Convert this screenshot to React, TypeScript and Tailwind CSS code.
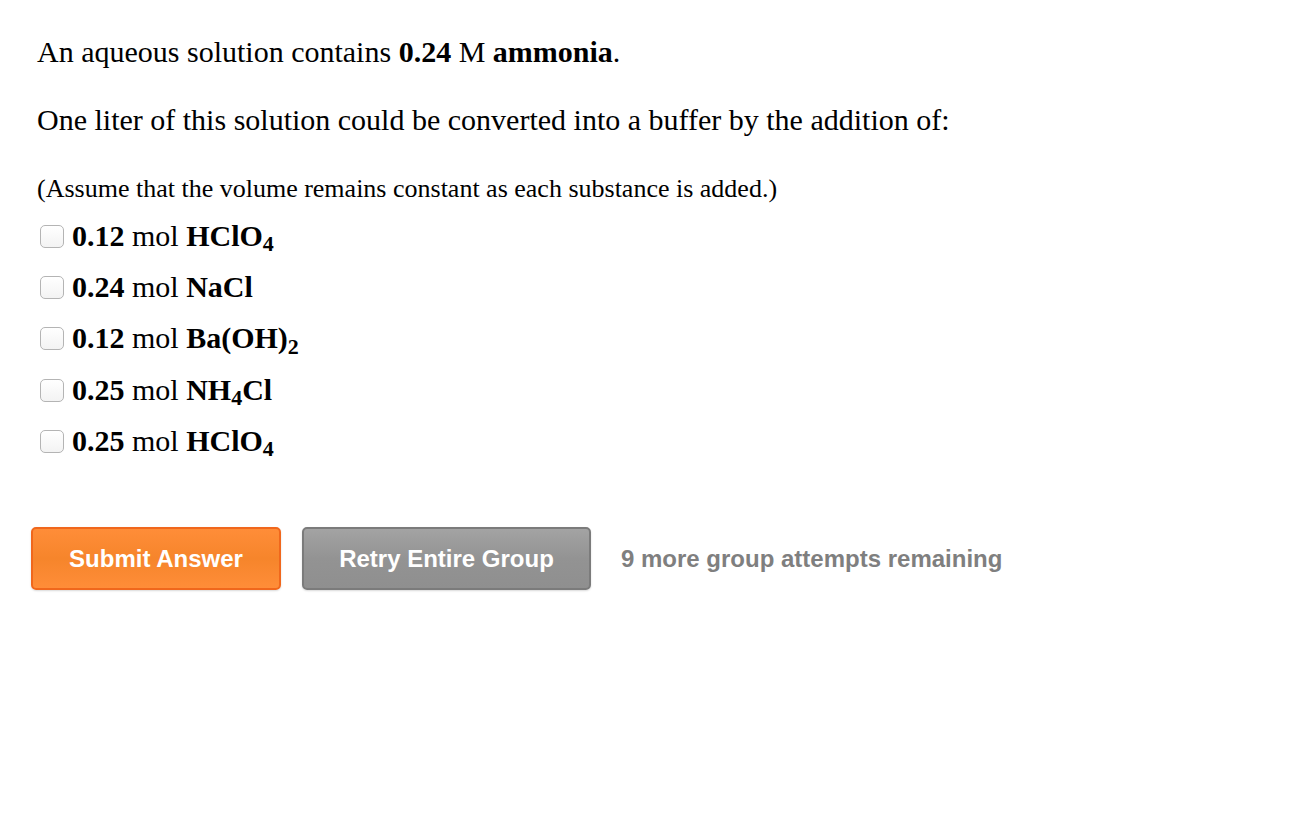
import React from 'react';

const OPTIONS: React.ReactNode[] = [
  <>
    <b>0.12</b> mol <b>HClO<sub className="text-[22px]">4</sub></b>
  </>,
  <>
    <b>0.24</b> mol <b>NaCl</b>
  </>,
  <>
    <b>0.12</b> mol <b>Ba(OH)<sub className="text-[22px]">2</sub></b>
  </>,
  <>
    <b>0.25</b> mol <b>NH<sub className="text-[22px]">4</sub>Cl</b>
  </>,
  <>
    <b>0.25</b> mol <b>HClO<sub className="text-[22px]">4</sub></b>
  </>,
];

export default function App() {
  return (
    <div className="min-h-[814px] bg-white pl-[37px] pt-[33px] text-black" style={{ fontFamily: '"Liberation Serif", "Times New Roman", serif' }}>
      <p className="text-[30px] leading-[38px]">
        An aqueous solution contains <b>0.24</b> M <b>ammonia</b>.
      </p>
      <p className="mt-[30px] text-[30px] leading-[38px]">
        One liter of this solution could be converted into a buffer by the addition of:
      </p>
      <p className="mt-[33px] text-[26px] leading-[34px]">
        (Assume that the volume remains constant as each substance is added.)
      </p>

      <div className="mt-[4px] flex flex-col">
        {OPTIONS.map((opt, i) => (
          <label key={i} className="flex h-[51.3px] items-center gap-[8px] text-[30px]">
            <span className="ml-[3px] mt-[1px] block h-[23px] w-[24px] shrink-0 rounded-[5px] border border-[#b4b4b4] bg-gradient-to-b from-white to-[#f3f3f3]" />
            <span className="leading-[38px]">{opt}</span>
          </label>
        ))}
      </div>

      <div className="mt-[61px] flex items-center" style={{ fontFamily: '"Liberation Sans", Arial, sans-serif' }}>
        <button className="ml-[-6px] h-[63px] w-[250px] rounded-[5px] border-2 border-[#f0671c] bg-gradient-to-b from-[#ff8d38] via-[#f6852b] to-[#ff8d38] text-[24px] font-bold text-white shadow-[0_1px_2px_rgba(0,0,0,0.15)]">
          Submit Answer
        </button>
        <button className="ml-[21px] h-[63px] w-[289px] rounded-[5px] border-2 border-[#7b7b7b] bg-gradient-to-b from-[#a3a3a3] via-[#939393] to-[#8f8f8f] text-[24px] font-bold text-white shadow-[0_1px_2px_rgba(0,0,0,0.15)]">
          Retry Entire Group
        </button>
        <span className="ml-[30px] text-[24px] font-bold text-[#7f7f7f]">9 more group attempts remaining</span>
      </div>
    </div>
  );
}
